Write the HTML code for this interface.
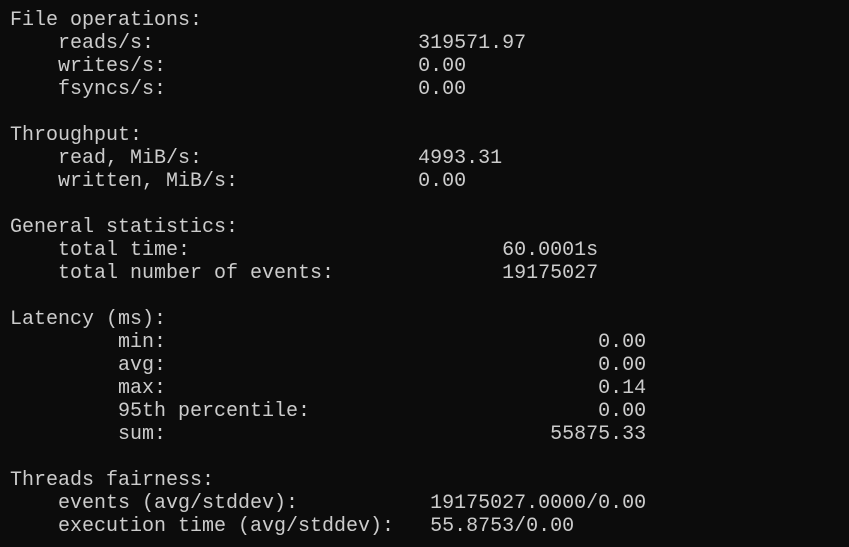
<!DOCTYPE html>
<html><head><meta charset="utf-8"><style>
html,body{margin:0;padding:0;background:#0c0c0c;width:849px;height:547px;overflow:hidden}
pre{margin:0;position:absolute;left:10px;top:9px;font-family:"Liberation Mono",monospace;font-size:20px;line-height:23px;color:#cccccc;white-space:pre}
</style></head><body><pre>File operations:
    reads/s:                      319571.97
    writes/s:                     0.00
    fsyncs/s:                     0.00

Throughput:
    read, MiB/s:                  4993.31
    written, MiB/s:               0.00

General statistics:
    total time:                          60.0001s
    total number of events:              19175027

Latency (ms):
         min:                                    0.00
         avg:                                    0.00
         max:                                    0.14
         95th percentile:                        0.00
         sum:                                55875.33

Threads fairness:
    events (avg/stddev):           19175027.0000/0.00
    execution time (avg/stddev):   55.8753/0.00</pre></body></html>
